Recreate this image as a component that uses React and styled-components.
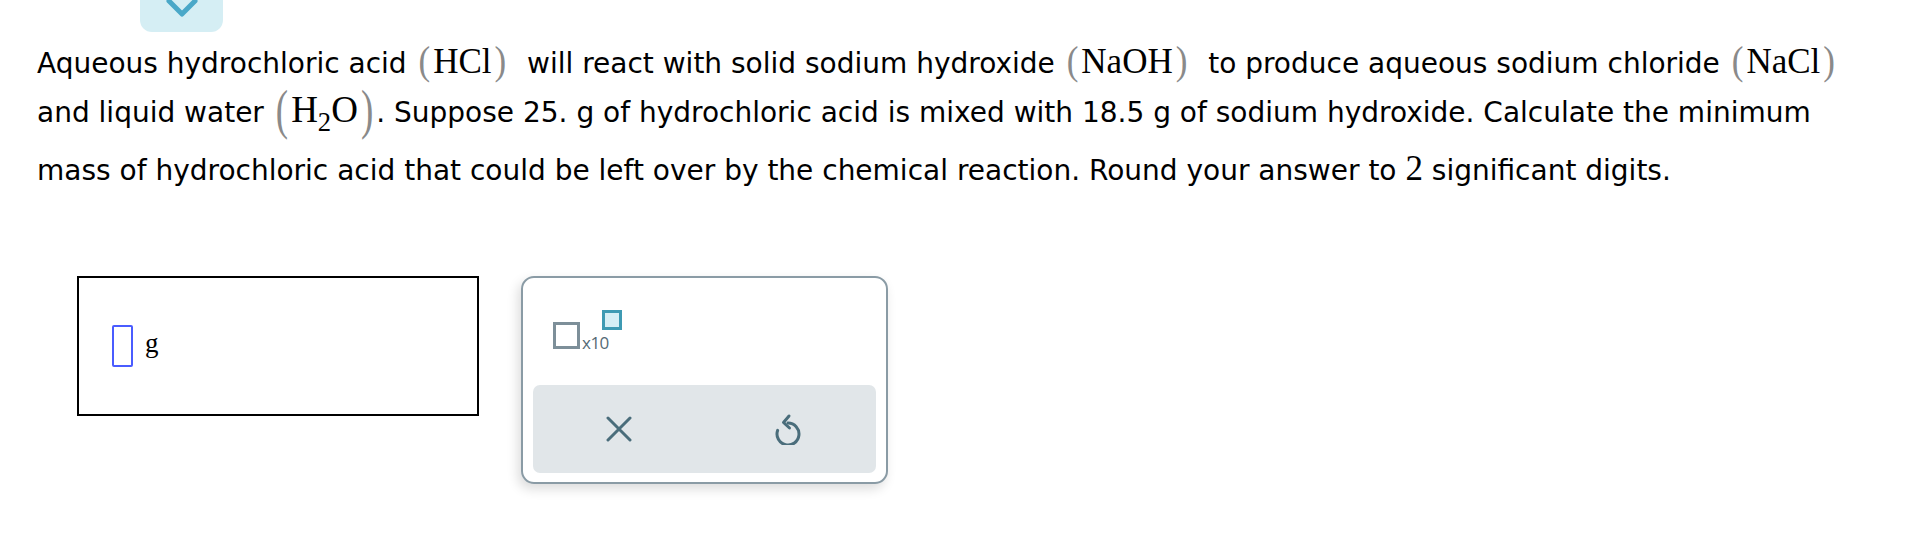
import React from "react"
import styled, { createGlobalStyle } from "styled-components"

const GlobalStyle = createGlobalStyle`
  html, body {
    margin: 0;
    padding: 0;
    background: #ffffff;
  }
  body {
    font-family: "DejaVu Sans", Verdana, sans-serif;
    color: #000;
  }
`

const Page = styled.div`
  width: 1910px;
  height: 550px;
  overflow: hidden;
  padding: 0 0 0 37px;
  box-sizing: border-box;
`

const TopButton = styled.div`
  margin: -30px 0 0 103px;
  width: 83px;
  height: 62px;
  border-radius: 12px;
  background: #d5eef4;
  display: flex;
  align-items: flex-end;
  justify-content: center;
  padding-bottom: 14px;
  box-sizing: border-box;
`

const Question = styled.p`
  margin: 7px 0 0;
  font-size: 28px;
  line-height: 49px;
  width: 1830px;
`

const Chem = styled.span`
  font-family: "Liberation Serif", "Times New Roman", serif;
  font-size: 35px;
  line-height: 40px;
  white-space: nowrap;
`

const TallChem = styled(Chem)`
  display: inline-block;
  font-size: 37px;
  padding-bottom: 16px;
`

const Paren = styled.span`
  display: inline-block;
  color: #8a8a8a;
  transform: scaleY(${(p) => p.$stretch || 1.12});
  margin: 0 3px;
`

const Sub = styled.sub`
  font-size: 0.72em;
  vertical-align: -0.32em;
  line-height: 0;
`

const Digit = styled.span`
  font-family: "Liberation Serif", "Times New Roman", serif;
  font-size: 35px;
  line-height: 30px;
`

const AnswerRow = styled.div`
  display: flex;
  align-items: flex-start;
  gap: 42px;
  margin: 81px 0 0 40px;
`

const AnswerBox = styled.div`
  width: 402px;
  height: 140px;
  border: 2px solid #000;
  box-sizing: border-box;
  display: flex;
  align-items: center;
  padding-left: 33px;
  gap: 12px;
`

const Cursor = styled.div`
  width: 21px;
  height: 42px;
  border: 2px solid #4a5cff;
  border-radius: 2px;
  box-sizing: border-box;
`

const Unit = styled.span`
  font-family: "Liberation Serif", "Times New Roman", serif;
  font-size: 27px;
  margin-top: -6px;
`

const Keypad = styled.div`
  width: 367px;
  height: 208px;
  border: 2px solid #8a9ba5;
  border-radius: 13px;
  box-sizing: border-box;
  box-shadow: -3px 5px 12px rgba(0, 0, 0, 0.14);
  padding: 11px 10px 9px;
  display: flex;
  flex-direction: column;
  justify-content: space-between;
`

const SciKey = styled.div`
  display: flex;
  align-items: flex-start;
  padding: 10px 0 0 20px;
  height: 60px;
`

const BaseBox = styled.div`
  width: 27px;
  height: 27px;
  border: 3px solid #7d8f99;
  box-sizing: border-box;
  margin-top: 23px;
`

const Times = styled.span`
  font-family: "Open Sans", "DejaVu Sans", sans-serif;
  font-size: 17px;
  letter-spacing: -0.5px;
  color: #546a75;
  margin-top: 32px;
  margin-left: 2px;
`

const ExpBox = styled.div`
  width: 20px;
  height: 20px;
  border: 3px solid #3e9ab3;
  background: #d5eef5;
  box-sizing: border-box;
  margin-left: -7px;
  margin-top: 11px;
`

const Actions = styled.div`
  height: 88px;
  border-radius: 7px;
  background: #e1e6e9;
  display: flex;
  align-items: center;
  justify-content: space-between;
  padding: 0 68px 0 66px;
`

const IconButton = styled.div`
  width: 40px;
  height: 40px;
  display: flex;
  align-items: center;
  justify-content: center;
  color: #4a6d7b;
`

function Chevron() {
  return (
    <svg width="32" height="20" viewBox="0 0 32 20">
      <path d="M3 3 L16 16 L29 3" fill="none" stroke="#4aa8c8" strokeWidth="5" strokeLinecap="round" strokeLinejoin="round" />
    </svg>
  )
}

function ClearIcon() {
  return (
    <svg width="26" height="26" viewBox="0 0 26 26">
      <path d="M2 2 L24 24 M24 2 L2 24" stroke="currentColor" strokeWidth="3" strokeLinecap="round" />
    </svg>
  )
}

function UndoIcon() {
  return (
    <svg width="26" height="32" viewBox="0 0 26 32">
      <path d="M13 10 A11 11 0 1 1 2.6 17.4" fill="none" stroke="currentColor" strokeWidth="3" strokeLinecap="round" />
      <path d="M14 3 L8.5 9.5 L14.5 15" fill="none" stroke="currentColor" strokeWidth="3" strokeLinecap="round" strokeLinejoin="round" />
    </svg>
  )
}

export default function App() {
  return (
    <>
      <GlobalStyle />
      <Page>
        <TopButton>
          <Chevron />
        </TopButton>
        <Question>
          Aqueous hydrochloric acid{" "}
          <Chem>
            <Paren>(</Paren>HCl<Paren>)</Paren>
          </Chem>
          &nbsp; will react with solid sodium hydroxide{" "}
          <Chem>
            <Paren>(</Paren>NaOH<Paren>)</Paren>
          </Chem>
          &nbsp; to produce aqueous sodium chloride{" "}
          <Chem>
            <Paren>(</Paren>NaCl<Paren>)</Paren>
          </Chem>{" "}
          and liquid water{" "}
          <TallChem>
            <Paren $stretch={1.5}>(</Paren>H<Sub>2</Sub>O<Paren $stretch={1.5}>)</Paren>
          </TallChem>
          . Suppose 25. g of hydrochloric acid is mixed with 18.5 g of sodium hydroxide. Calculate the minimum
          mass of hydrochloric acid that could be left over by the chemical reaction. Round your answer to{" "}
          <Digit>2</Digit> significant digits.
        </Question>
        <AnswerRow>
          <AnswerBox>
            <Cursor />
            <Unit>g</Unit>
          </AnswerBox>
          <Keypad>
            <SciKey>
              <BaseBox />
              <Times>x10</Times>
              <ExpBox />
            </SciKey>
            <Actions>
              <IconButton>
                <ClearIcon />
              </IconButton>
              <IconButton>
                <UndoIcon />
              </IconButton>
            </Actions>
          </Keypad>
        </AnswerRow>
      </Page>
    </>
  )
}
